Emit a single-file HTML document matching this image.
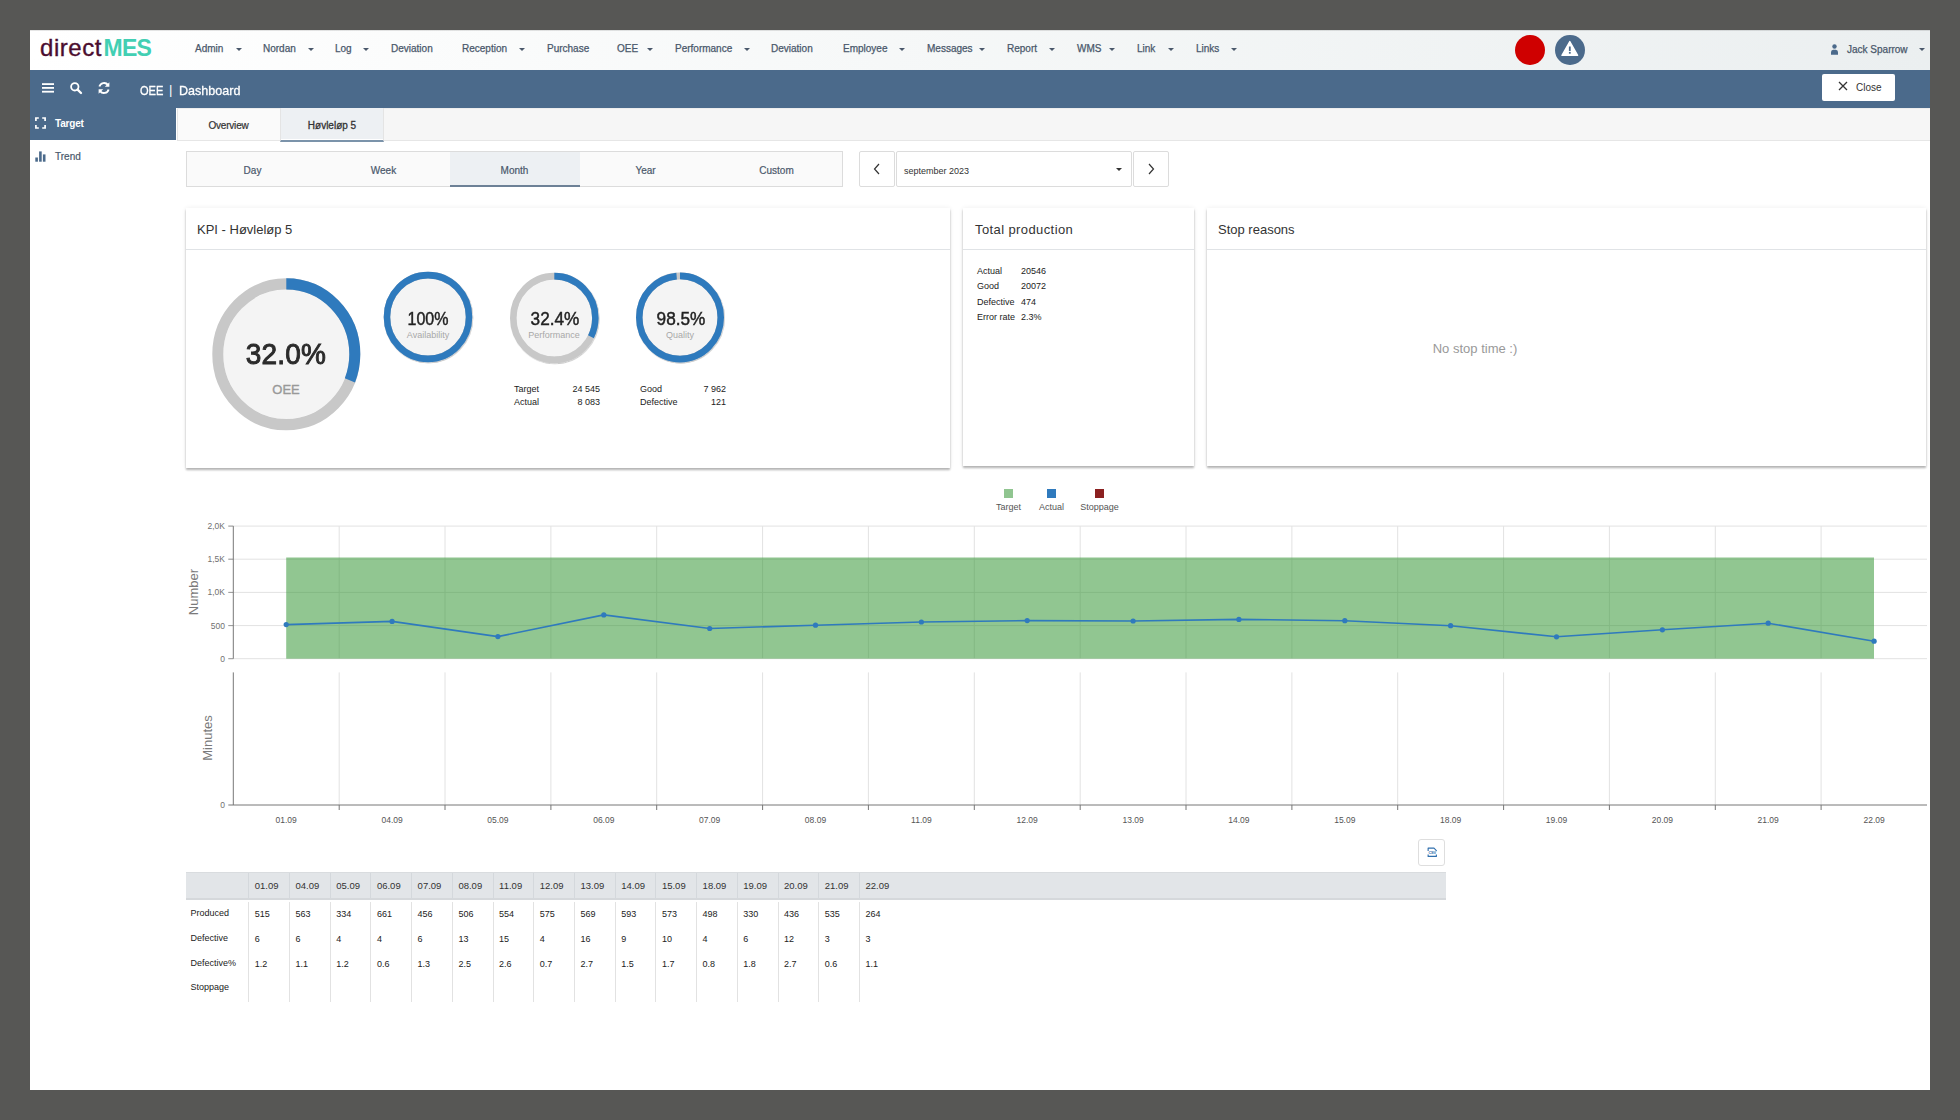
<!DOCTYPE html>
<html><head><meta charset="utf-8">
<style>
*{box-sizing:border-box;margin:0;padding:0}
html,body{width:1960px;height:1120px;overflow:hidden;background:#575755;font-family:"Liberation Sans",sans-serif}
.a{position:absolute}
.t{position:absolute;white-space:nowrap;line-height:1}
#page{position:absolute;left:30px;top:30px;width:1900px;height:1060px;background:#fff}
#nav{left:30px;top:30px;width:1900px;height:40px;background:linear-gradient(90deg,#ffffff 0%,#f6f8f8 45%,#ebeff0 100%);border-top:1px solid rgba(0,0,0,0.1)}
.ni{position:absolute;top:43px;font-size:10px;color:#4a586b;white-space:nowrap;line-height:12px;-webkit-text-stroke:0.25px #4a586b}
.car{position:absolute;top:48px;width:0;height:0;border-left:3px solid transparent;border-right:3px solid transparent;border-top:3px solid #4a586b}
#hdr{left:30px;top:70px;width:1900px;height:38px;background:#4b6a8b}
.pl{top:165px;width:131px;text-align:center;font-size:10px;color:#4a586b;line-height:12px;-webkit-text-stroke:0.2px #4a586b}
.card{position:absolute;background:#fff;box-shadow:0 1.5px 2px rgba(0,0,0,0.28),0 0 5px rgba(0,0,0,0.07)}
.ch{top:222px;font-size:13px;color:#333;line-height:15px}
.tp{font-size:9px;color:#222;line-height:11px}
.gv{top:309px;width:100px;text-align:center;font-size:18px;color:#222;line-height:20px;-webkit-text-stroke:0.45px #222}
.gl{top:330px;width:100px;text-align:center;font-size:9px;color:#a8a8a8;line-height:10px}
.st{font-size:9px;color:#222;line-height:11px}
.sr{width:60px;text-align:right}
.tt{font-size:9.5px;color:#333;line-height:11px}
.tv{font-size:9px;color:#222;line-height:11px}
</style></head><body>
<div id="page"></div>
<div id="nav" class="a"></div>
<div class="t" style="left:40px;top:36px;font-size:24px;line-height:24px;color:#4b0d2f;letter-spacing:0.55px;-webkit-text-stroke:0.35px #4b0d2f">direct</div>
<div class="t" style="left:103.6px;top:36.3px;font-size:23px;line-height:24px;color:#42cfb3;font-weight:bold;letter-spacing:-0.85px">MES</div>
<div class="ni" style="left:195px">Admin</div>
<div class="car" style="left:236px"></div>
<div class="ni" style="left:263px">Nordan</div>
<div class="car" style="left:308px"></div>
<div class="ni" style="left:335px">Log</div>
<div class="car" style="left:363px"></div>
<div class="ni" style="left:391px">Deviation</div>
<div class="ni" style="left:462px">Reception</div>
<div class="car" style="left:519px"></div>
<div class="ni" style="left:547px">Purchase</div>
<div class="ni" style="left:617px">OEE</div>
<div class="car" style="left:647px"></div>
<div class="ni" style="left:675px">Performance</div>
<div class="car" style="left:744px"></div>
<div class="ni" style="left:771px">Deviation</div>
<div class="ni" style="left:843px">Employee</div>
<div class="car" style="left:899px"></div>
<div class="ni" style="left:927px">Messages</div>
<div class="car" style="left:979px"></div>
<div class="ni" style="left:1007px">Report</div>
<div class="car" style="left:1049px"></div>
<div class="ni" style="left:1077px">WMS</div>
<div class="car" style="left:1109px"></div>
<div class="ni" style="left:1137px">Link</div>
<div class="car" style="left:1168px"></div>
<div class="ni" style="left:1196px">Links</div>
<div class="car" style="left:1231px"></div>
<div class="a" style="left:1515px;top:34.5px;width:30px;height:30.5px;border-radius:50%;background:#cf0000"></div>
<div class="a" style="left:1554.5px;top:34.5px;width:30px;height:30.5px;border-radius:50%;background:#4b6a8b"></div>
<svg class="a" style="left:1559.5px;top:39px" width="20" height="20" viewBox="0 0 20 20"><path d="M9.8 2.6 L17.6 16.4 L2 16.4 Z" fill="#fff" stroke="#fff" stroke-width="1.4" stroke-linejoin="round"/><rect x="8.9" y="7.5" width="1.8" height="4.6" fill="#4b6a8b"/><rect x="8.9" y="13" width="1.8" height="1.7" fill="#4b6a8b"/></svg>
<svg class="a" style="left:1830px;top:44px" width="9" height="11" viewBox="0 0 9 11"><circle cx="4.5" cy="2.5" r="2.2" fill="#4b6a8b"/><path d="M1 10.8 L1 8.3 Q1 5.8 3.2 5.8 L5.8 5.8 Q8 5.8 8 8.3 L8 10.8 Z" fill="#4b6a8b"/></svg>
<div class="ni" style="left:1847px;top:44px">Jack Sparrow</div><div class="car" style="left:1918.5px;top:48px"></div>
<div id="hdr" class="a"></div>
<svg class="a" style="left:41px;top:82px" width="14" height="12" viewBox="0 0 14 12"><rect x="1" y="1.2" width="12" height="1.8" fill="#fff"/><rect x="1" y="5" width="12" height="1.8" fill="#fff"/><rect x="1" y="8.8" width="12" height="1.8" fill="#fff"/></svg>
<svg class="a" style="left:69px;top:81px" width="14" height="14" viewBox="0 0 14 14"><circle cx="5.8" cy="5.8" r="3.7" fill="none" stroke="#fff" stroke-width="1.8"/><path d="M8.6 8.6 L12 12" stroke="#fff" stroke-width="2.3" stroke-linecap="round"/></svg>
<svg class="a" style="left:97px;top:81px" width="14" height="14" viewBox="0 0 14 14"><path d="M2.4 5.6 A4.8 4.8 0 0 1 10.9 3.9" fill="none" stroke="#fff" stroke-width="1.9"/><path d="M12.4 1.2 L12.4 5.8 L7.8 5.8 Z" fill="#fff"/><path d="M11.6 8.4 A4.8 4.8 0 0 1 3.1 10.1" fill="none" stroke="#fff" stroke-width="1.9"/><path d="M1.6 12.8 L1.6 8.2 L6.2 8.2 Z" fill="#fff"/></svg>
<div class="t" style="left:140px;top:84px;font-size:13.5px;color:#fff;line-height:14px;transform:scaleX(0.82);transform-origin:0 0;-webkit-text-stroke:0.3px #fff">OEE</div>
<div class="t" style="left:169px;top:83px;font-size:13px;color:#fff;line-height:14px">|</div>
<div class="t" style="left:179px;top:84px;font-size:13.5px;color:#fff;line-height:14px;transform:scaleX(0.93);transform-origin:0 0;-webkit-text-stroke:0.3px #fff">Dashboard</div>
<div class="a" style="left:1822px;top:74px;width:73px;height:27px;background:#fff;border-radius:2px"></div>
<svg class="a" style="left:1838px;top:81px" width="10" height="10" viewBox="0 0 10 10"><path d="M1 1 L9 9 M9 1 L1 9" stroke="#333" stroke-width="1.3"/></svg>
<div class="t" style="left:1856px;top:82px;font-size:10px;color:#333;line-height:12px">Close</div>
<div class="a" style="left:30px;top:108px;width:146px;height:32px;background:#4b6a8b"></div>
<svg class="a" style="left:35px;top:117px" width="11" height="12" viewBox="0 0 11 12"><path d="M0.9 4 V1 H3.8 M7.2 1 H10.1 V4 M10.1 8 V11 H7.2 M3.8 11 H0.9 V8" fill="none" stroke="#fff" stroke-width="1.7"/></svg>
<div class="t" style="left:55px;top:118px;font-size:10px;color:#fff;font-weight:bold;line-height:12px;letter-spacing:-0.2px">Target</div>
<svg class="a" style="left:35px;top:151px" width="11" height="11" viewBox="0 0 11 11"><rect x="0.3" y="6.5" width="2.6" height="4.2" fill="#4b6a8b"/><rect x="4.1" y="0.4" width="2.6" height="10.3" fill="#4b6a8b"/><rect x="7.9" y="3.4" width="2.6" height="7.3" fill="#4b6a8b"/></svg>
<div class="t" style="left:55px;top:151px;font-size:10px;color:#4a586b;line-height:12px;-webkit-text-stroke:0.2px #4a586b">Trend</div>
<div class="a" style="left:177px;top:108px;width:1753px;height:33px;background:#f6f6f6;border-top:1px solid #ededed;border-bottom:1px solid #e6e6e6"></div>
<div class="a" style="left:177px;top:109px;width:103px;height:32px;background:#fafafa;border-left:1px solid #e4e4e4;border-bottom:1px solid #e6e6e6"></div>
<div class="t" style="left:177px;width:103px;text-align:center;top:120px;font-size:10px;color:#333;line-height:12px;letter-spacing:-0.2px;-webkit-text-stroke:0.2px #333">Overview</div>
<div class="a" style="left:280px;top:108px;width:104px;height:34px;background:#edf0f3;border-left:1px solid #e4e4e4;border-right:1px solid #e4e4e4;border-bottom:2px solid #7b93aa"></div>
<div class="a" style="left:281px;top:139px;width:102px;height:1px;background:#fff"></div>
<div class="t" style="left:280px;width:104px;text-align:center;top:120px;font-size:10px;color:#333;line-height:12px;-webkit-text-stroke:0.3px #333">Høvleløp 5</div>
<div class="a" style="left:186px;top:151px;width:657px;height:36px;background:#fafafa;border:1px solid #dcdcdc"></div>
<div class="a" style="left:450px;top:152px;width:130px;height:35px;background:#edf0f3;border-bottom:2px solid #6d8196"></div>
<div class="t pl" style="left:187px">Day</div>
<div class="t pl" style="left:318px">Week</div>
<div class="t pl" style="left:449px">Month</div>
<div class="t pl" style="left:580px">Year</div>
<div class="t pl" style="left:711px">Custom</div>
<div class="a" style="left:859px;top:151px;width:36px;height:36px;background:#fff;border:1px solid #dcdcdc;border-radius:2px"></div>
<svg class="a" style="left:872px;top:163px" width="10" height="12" viewBox="0 0 10 12"><path d="M7 1 L2.5 6 L7 11" fill="none" stroke="#333" stroke-width="1.2"/></svg>
<div class="a" style="left:896px;top:151px;width:236px;height:36px;background:#fff;border:1px solid #dcdcdc;border-radius:2px"></div>
<div class="t" style="left:904px;top:166px;font-size:9px;color:#333;line-height:11px">september 2023</div>
<div class="car" style="left:1116px;top:168px;border-top-color:#333"></div>
<div class="a" style="left:1133px;top:151px;width:36px;height:36px;background:#fff;border:1px solid #dcdcdc;border-radius:2px"></div>
<svg class="a" style="left:1146px;top:163px" width="10" height="12" viewBox="0 0 10 12"><path d="M3 1 L7.5 6 L3 11" fill="none" stroke="#333" stroke-width="1.2"/></svg>
<div class="card" style="left:186px;top:208px;width:764px;height:260px"></div>
<div class="a" style="left:186px;top:249px;width:764px;height:1px;background:#e0e3e6"></div>
<div class="card" style="left:963px;top:208px;width:231px;height:258px"></div>
<div class="a" style="left:963px;top:249px;width:231px;height:1px;background:#e0e3e6"></div>
<div class="card" style="left:1207px;top:208px;width:719px;height:258px"></div>
<div class="a" style="left:1207px;top:249px;width:719px;height:1px;background:#e0e3e6"></div>
<div class="t ch" style="left:197px">KPI - Høvleløp 5</div>
<div class="t ch" style="left:975px;letter-spacing:0.4px">Total production</div>
<div class="t ch" style="left:1218px">Stop reasons</div>
<div class="t" style="left:1207px;width:536px;text-align:center;top:342px;font-size:13px;color:#999;line-height:14px">No stop time :)</div>
<div class="t tp" style="left:977px;top:266px">Actual</div><div class="t tp" style="left:1021px;top:266px">20546</div>
<div class="t tp" style="left:977px;top:281px">Good</div><div class="t tp" style="left:1021px;top:281px">20072</div>
<div class="t tp" style="left:977px;top:297px">Defective</div><div class="t tp" style="left:1021px;top:297px">474</div>
<div class="t tp" style="left:977px;top:312px">Error rate</div><div class="t tp" style="left:1021px;top:312px">2.3%</div>
<svg class="a" style="left:0;top:0" width="960" height="480" viewBox="0 0 960 480"><defs><filter id="sh" x="-20%" y="-20%" width="140%" height="140%"><feDropShadow dx="0.6" dy="0.8" stdDeviation="0.7" flood-color="#000" flood-opacity="0.25"/></filter></defs><g transform="translate(286.3 354.3) scale(1 1.027)"><circle cx="0" cy="0" r="63" fill="#f4f4f4"/><circle cx="0" cy="0" r="68.5" fill="none" stroke="#c8c8c8" stroke-width="11"/><circle cx="0" cy="0" r="68.5" fill="none" stroke="#2f7abd" stroke-width="11" stroke-dasharray="133.42 430.40" transform="rotate(-90)"/></g><g filter="url(#sh)"><g transform="translate(428 317) scale(1 1.02)"><circle cx="0" cy="0" r="37.8" fill="#f4f4f4"/><circle cx="0" cy="0" r="41.05" fill="none" stroke="#c8c8c8" stroke-width="6.5"/><circle cx="0" cy="0" r="41.05" fill="none" stroke="#2f7abd" stroke-width="6.5"/></g></g><g filter="url(#sh)"><g transform="translate(554.3 318) scale(1 1.02)"><circle cx="0" cy="0" r="37.8" fill="#f4f4f4"/><circle cx="0" cy="0" r="41.05" fill="none" stroke="#c8c8c8" stroke-width="6.5"/><circle cx="0" cy="0" r="41.05" fill="none" stroke="#2f7abd" stroke-width="6.5" stroke-dasharray="83.57 257.92" transform="rotate(-90)"/></g></g><g filter="url(#sh)"><g transform="translate(680 317.5) scale(1 1.02)"><circle cx="0" cy="0" r="37.5" fill="#f4f4f4"/><circle cx="0" cy="0" r="40.75" fill="none" stroke="#c8c8c8" stroke-width="6.5"/><circle cx="0" cy="0" r="40.75" fill="none" stroke="#2f7abd" stroke-width="6.5" stroke-dasharray="252.20 256.04" transform="rotate(-90)"/></g></g></svg>
<div class="t" style="left:186px;width:200px;text-align:center;top:338px;font-size:28px;color:#2b2b2b;line-height:32px;transform:scaleY(1.06);letter-spacing:0.2px;-webkit-text-stroke:0.9px #2b2b2b">32.0%</div>
<div class="t" style="left:186px;width:200px;text-align:center;top:383px;font-size:13px;color:#999;line-height:14px;-webkit-text-stroke:0.35px #999">OEE</div>
<div class="t gv" style="left:378px;transform:scaleX(0.89)">100%</div><div class="t gl" style="left:378px">Availability</div>
<div class="t gv" style="left:504.5px;transform:scaleX(0.955)">32.4%</div><div class="t gl" style="left:504px">Performance</div>
<div class="t gv" style="left:630.5px;transform:scaleX(0.955)">98.5%</div><div class="t gl" style="left:630px">Quality</div>
<div class="t st" style="left:514px;top:384px">Target</div><div class="t st sr" style="left:540px;top:384px">24 545</div>
<div class="t st" style="left:514px;top:397px">Actual</div><div class="t st sr" style="left:540px;top:397px">8 083</div>
<div class="t st" style="left:640px;top:384px">Good</div><div class="t st sr" style="left:666px;top:384px">7 962</div>
<div class="t st" style="left:640px;top:397px">Defective</div><div class="t st sr" style="left:666px;top:397px">121</div>
<svg class="a" style="left:0;top:0" width="1960" height="840" viewBox="0 0 1960 840"><line x1="228.3" y1="658.7" x2="1927" y2="658.7" stroke="#e2e2e2" stroke-width="1"/><line x1="228.3" y1="625.6" x2="1927" y2="625.6" stroke="#e2e2e2" stroke-width="1"/><line x1="228.3" y1="592.4" x2="1927" y2="592.4" stroke="#e2e2e2" stroke-width="1"/><line x1="228.3" y1="559.2" x2="1927" y2="559.2" stroke="#e2e2e2" stroke-width="1"/><line x1="228.3" y1="526.1" x2="1927" y2="526.1" stroke="#e2e2e2" stroke-width="1"/><line x1="339.2" y1="526.1" x2="339.2" y2="658.7" stroke="#e2e2e2" stroke-width="1"/><line x1="445.0" y1="526.1" x2="445.0" y2="658.7" stroke="#e2e2e2" stroke-width="1"/><line x1="550.9" y1="526.1" x2="550.9" y2="658.7" stroke="#e2e2e2" stroke-width="1"/><line x1="656.7" y1="526.1" x2="656.7" y2="658.7" stroke="#e2e2e2" stroke-width="1"/><line x1="762.6" y1="526.1" x2="762.6" y2="658.7" stroke="#e2e2e2" stroke-width="1"/><line x1="868.4" y1="526.1" x2="868.4" y2="658.7" stroke="#e2e2e2" stroke-width="1"/><line x1="974.3" y1="526.1" x2="974.3" y2="658.7" stroke="#e2e2e2" stroke-width="1"/><line x1="1080.2" y1="526.1" x2="1080.2" y2="658.7" stroke="#e2e2e2" stroke-width="1"/><line x1="1186.0" y1="526.1" x2="1186.0" y2="658.7" stroke="#e2e2e2" stroke-width="1"/><line x1="1291.9" y1="526.1" x2="1291.9" y2="658.7" stroke="#e2e2e2" stroke-width="1"/><line x1="1397.7" y1="526.1" x2="1397.7" y2="658.7" stroke="#e2e2e2" stroke-width="1"/><line x1="1503.6" y1="526.1" x2="1503.6" y2="658.7" stroke="#e2e2e2" stroke-width="1"/><line x1="1609.4" y1="526.1" x2="1609.4" y2="658.7" stroke="#e2e2e2" stroke-width="1"/><line x1="1715.3" y1="526.1" x2="1715.3" y2="658.7" stroke="#e2e2e2" stroke-width="1"/><line x1="1821.1" y1="526.1" x2="1821.1" y2="658.7" stroke="#e2e2e2" stroke-width="1"/><line x1="228.3" y1="658.7" x2="233.3" y2="658.7" stroke="#999" stroke-width="1"/><line x1="228.3" y1="625.6" x2="233.3" y2="625.6" stroke="#999" stroke-width="1"/><line x1="228.3" y1="592.4" x2="233.3" y2="592.4" stroke="#999" stroke-width="1"/><line x1="228.3" y1="559.2" x2="233.3" y2="559.2" stroke="#999" stroke-width="1"/><line x1="228.3" y1="526.1" x2="233.3" y2="526.1" stroke="#999" stroke-width="1"/><line x1="233.3" y1="526.1" x2="233.3" y2="658.7" stroke="#777" stroke-width="1"/><rect x="286.2" y="557.5" width="1587.8" height="101.2" fill="#2f942f" fill-opacity="0.53"/><polyline points="286.2,624.6 392.1,621.4 497.9,636.6 603.8,614.9 709.7,628.5 815.5,625.2 921.4,622.0 1027.2,620.6 1133.1,621.0 1238.9,619.4 1344.8,620.7 1450.6,625.7 1556.5,636.8 1662.4,629.8 1768.2,623.2 1874.1,641.2" fill="none" stroke="#2f7abd" stroke-width="1.6"/><circle cx="286.2" cy="624.6" r="2.6" fill="#2f7abd"/><circle cx="392.1" cy="621.4" r="2.6" fill="#2f7abd"/><circle cx="497.9" cy="636.6" r="2.6" fill="#2f7abd"/><circle cx="603.8" cy="614.9" r="2.6" fill="#2f7abd"/><circle cx="709.7" cy="628.5" r="2.6" fill="#2f7abd"/><circle cx="815.5" cy="625.2" r="2.6" fill="#2f7abd"/><circle cx="921.4" cy="622.0" r="2.6" fill="#2f7abd"/><circle cx="1027.2" cy="620.6" r="2.6" fill="#2f7abd"/><circle cx="1133.1" cy="621.0" r="2.6" fill="#2f7abd"/><circle cx="1238.9" cy="619.4" r="2.6" fill="#2f7abd"/><circle cx="1344.8" cy="620.7" r="2.6" fill="#2f7abd"/><circle cx="1450.6" cy="625.7" r="2.6" fill="#2f7abd"/><circle cx="1556.5" cy="636.8" r="2.6" fill="#2f7abd"/><circle cx="1662.4" cy="629.8" r="2.6" fill="#2f7abd"/><circle cx="1768.2" cy="623.2" r="2.6" fill="#2f7abd"/><circle cx="1874.1" cy="641.2" r="2.6" fill="#2f7abd"/><text x="225" y="661.7" text-anchor="end" font-family="Liberation Sans" font-size="8.5" fill="#707070">0</text><text x="225" y="628.6" text-anchor="end" font-family="Liberation Sans" font-size="8.5" fill="#707070">500</text><text x="225" y="595.4" text-anchor="end" font-family="Liberation Sans" font-size="8.5" fill="#707070">1,0K</text><text x="225" y="562.2" text-anchor="end" font-family="Liberation Sans" font-size="8.5" fill="#707070">1,5K</text><text x="225" y="529.1" text-anchor="end" font-family="Liberation Sans" font-size="8.5" fill="#707070">2,0K</text><text transform="translate(198 592) rotate(-90)" text-anchor="middle" font-family="Liberation Sans" font-size="13" fill="#7a7a7a">Number</text><line x1="339.2" y1="672.4" x2="339.2" y2="805" stroke="#e2e2e2" stroke-width="1"/><line x1="445.0" y1="672.4" x2="445.0" y2="805" stroke="#e2e2e2" stroke-width="1"/><line x1="550.9" y1="672.4" x2="550.9" y2="805" stroke="#e2e2e2" stroke-width="1"/><line x1="656.7" y1="672.4" x2="656.7" y2="805" stroke="#e2e2e2" stroke-width="1"/><line x1="762.6" y1="672.4" x2="762.6" y2="805" stroke="#e2e2e2" stroke-width="1"/><line x1="868.4" y1="672.4" x2="868.4" y2="805" stroke="#e2e2e2" stroke-width="1"/><line x1="974.3" y1="672.4" x2="974.3" y2="805" stroke="#e2e2e2" stroke-width="1"/><line x1="1080.2" y1="672.4" x2="1080.2" y2="805" stroke="#e2e2e2" stroke-width="1"/><line x1="1186.0" y1="672.4" x2="1186.0" y2="805" stroke="#e2e2e2" stroke-width="1"/><line x1="1291.9" y1="672.4" x2="1291.9" y2="805" stroke="#e2e2e2" stroke-width="1"/><line x1="1397.7" y1="672.4" x2="1397.7" y2="805" stroke="#e2e2e2" stroke-width="1"/><line x1="1503.6" y1="672.4" x2="1503.6" y2="805" stroke="#e2e2e2" stroke-width="1"/><line x1="1609.4" y1="672.4" x2="1609.4" y2="805" stroke="#e2e2e2" stroke-width="1"/><line x1="1715.3" y1="672.4" x2="1715.3" y2="805" stroke="#e2e2e2" stroke-width="1"/><line x1="1821.1" y1="672.4" x2="1821.1" y2="805" stroke="#e2e2e2" stroke-width="1"/><line x1="339.2" y1="805" x2="339.2" y2="810" stroke="#777" stroke-width="1"/><line x1="445.0" y1="805" x2="445.0" y2="810" stroke="#777" stroke-width="1"/><line x1="550.9" y1="805" x2="550.9" y2="810" stroke="#777" stroke-width="1"/><line x1="656.7" y1="805" x2="656.7" y2="810" stroke="#777" stroke-width="1"/><line x1="762.6" y1="805" x2="762.6" y2="810" stroke="#777" stroke-width="1"/><line x1="868.4" y1="805" x2="868.4" y2="810" stroke="#777" stroke-width="1"/><line x1="974.3" y1="805" x2="974.3" y2="810" stroke="#777" stroke-width="1"/><line x1="1080.2" y1="805" x2="1080.2" y2="810" stroke="#777" stroke-width="1"/><line x1="1186.0" y1="805" x2="1186.0" y2="810" stroke="#777" stroke-width="1"/><line x1="1291.9" y1="805" x2="1291.9" y2="810" stroke="#777" stroke-width="1"/><line x1="1397.7" y1="805" x2="1397.7" y2="810" stroke="#777" stroke-width="1"/><line x1="1503.6" y1="805" x2="1503.6" y2="810" stroke="#777" stroke-width="1"/><line x1="1609.4" y1="805" x2="1609.4" y2="810" stroke="#777" stroke-width="1"/><line x1="1715.3" y1="805" x2="1715.3" y2="810" stroke="#777" stroke-width="1"/><line x1="1821.1" y1="805" x2="1821.1" y2="810" stroke="#777" stroke-width="1"/><line x1="233.3" y1="672.4" x2="233.3" y2="805" stroke="#777" stroke-width="1"/><line x1="228.3" y1="805" x2="1927" y2="805" stroke="#777" stroke-width="1"/><text x="225" y="808.0" text-anchor="end" font-family="Liberation Sans" font-size="8.5" fill="#707070">0</text><text transform="translate(212 738) rotate(-90)" text-anchor="middle" font-family="Liberation Sans" font-size="13" fill="#7a7a7a">Minutes</text><text x="286.2" y="823" text-anchor="middle" font-family="Liberation Sans" font-size="8.5" fill="#555">01.09</text><text x="392.1" y="823" text-anchor="middle" font-family="Liberation Sans" font-size="8.5" fill="#555">04.09</text><text x="497.9" y="823" text-anchor="middle" font-family="Liberation Sans" font-size="8.5" fill="#555">05.09</text><text x="603.8" y="823" text-anchor="middle" font-family="Liberation Sans" font-size="8.5" fill="#555">06.09</text><text x="709.7" y="823" text-anchor="middle" font-family="Liberation Sans" font-size="8.5" fill="#555">07.09</text><text x="815.5" y="823" text-anchor="middle" font-family="Liberation Sans" font-size="8.5" fill="#555">08.09</text><text x="921.4" y="823" text-anchor="middle" font-family="Liberation Sans" font-size="8.5" fill="#555">11.09</text><text x="1027.2" y="823" text-anchor="middle" font-family="Liberation Sans" font-size="8.5" fill="#555">12.09</text><text x="1133.1" y="823" text-anchor="middle" font-family="Liberation Sans" font-size="8.5" fill="#555">13.09</text><text x="1238.9" y="823" text-anchor="middle" font-family="Liberation Sans" font-size="8.5" fill="#555">14.09</text><text x="1344.8" y="823" text-anchor="middle" font-family="Liberation Sans" font-size="8.5" fill="#555">15.09</text><text x="1450.6" y="823" text-anchor="middle" font-family="Liberation Sans" font-size="8.5" fill="#555">18.09</text><text x="1556.5" y="823" text-anchor="middle" font-family="Liberation Sans" font-size="8.5" fill="#555">19.09</text><text x="1662.4" y="823" text-anchor="middle" font-family="Liberation Sans" font-size="8.5" fill="#555">20.09</text><text x="1768.2" y="823" text-anchor="middle" font-family="Liberation Sans" font-size="8.5" fill="#555">21.09</text><text x="1874.1" y="823" text-anchor="middle" font-family="Liberation Sans" font-size="8.5" fill="#555">22.09</text><rect x="1004" y="489" width="9" height="9" fill="#90c590"/><text x="1008.5" y="510" text-anchor="middle" font-family="Liberation Sans" font-size="9" fill="#555">Target</text><rect x="1047" y="489" width="9" height="9" fill="#2f7abd"/><text x="1051.5" y="510" text-anchor="middle" font-family="Liberation Sans" font-size="9" fill="#555">Actual</text><rect x="1095" y="489" width="9" height="9" fill="#8b2020"/><text x="1099.5" y="510" text-anchor="middle" font-family="Liberation Sans" font-size="9" fill="#555">Stoppage</text></svg>
<div class="a" style="left:186px;top:872px;width:1260px;height:28px;background:#e2e5e8;border-top:1px solid #d9dcdf;border-bottom:2px solid #d5d8db"></div>
<div class="a" style="left:248.3px;top:873px;width:1px;height:26px;background:#d4d8dc"></div>
<div class="a" style="left:248.3px;top:902px;width:1px;height:100px;background:#e2e2e2"></div>
<div class="t tt" style="left:254.8px;top:880px">01.09</div>
<div class="t tv" style="left:254.8px;top:909px">515</div>
<div class="t tv" style="left:254.8px;top:934px">6</div>
<div class="t tv" style="left:254.8px;top:959px">1.2</div>
<div class="a" style="left:289.0px;top:873px;width:1px;height:26px;background:#d4d8dc"></div>
<div class="a" style="left:289.0px;top:902px;width:1px;height:100px;background:#e2e2e2"></div>
<div class="t tt" style="left:295.5px;top:880px">04.09</div>
<div class="t tv" style="left:295.5px;top:909px">563</div>
<div class="t tv" style="left:295.5px;top:934px">6</div>
<div class="t tv" style="left:295.5px;top:959px">1.1</div>
<div class="a" style="left:329.7px;top:873px;width:1px;height:26px;background:#d4d8dc"></div>
<div class="a" style="left:329.7px;top:902px;width:1px;height:100px;background:#e2e2e2"></div>
<div class="t tt" style="left:336.2px;top:880px">05.09</div>
<div class="t tv" style="left:336.2px;top:909px">334</div>
<div class="t tv" style="left:336.2px;top:934px">4</div>
<div class="t tv" style="left:336.2px;top:959px">1.2</div>
<div class="a" style="left:370.4px;top:873px;width:1px;height:26px;background:#d4d8dc"></div>
<div class="a" style="left:370.4px;top:902px;width:1px;height:100px;background:#e2e2e2"></div>
<div class="t tt" style="left:376.9px;top:880px">06.09</div>
<div class="t tv" style="left:376.9px;top:909px">661</div>
<div class="t tv" style="left:376.9px;top:934px">4</div>
<div class="t tv" style="left:376.9px;top:959px">0.6</div>
<div class="a" style="left:411.1px;top:873px;width:1px;height:26px;background:#d4d8dc"></div>
<div class="a" style="left:411.1px;top:902px;width:1px;height:100px;background:#e2e2e2"></div>
<div class="t tt" style="left:417.6px;top:880px">07.09</div>
<div class="t tv" style="left:417.6px;top:909px">456</div>
<div class="t tv" style="left:417.6px;top:934px">6</div>
<div class="t tv" style="left:417.6px;top:959px">1.3</div>
<div class="a" style="left:451.9px;top:873px;width:1px;height:26px;background:#d4d8dc"></div>
<div class="a" style="left:451.9px;top:902px;width:1px;height:100px;background:#e2e2e2"></div>
<div class="t tt" style="left:458.4px;top:880px">08.09</div>
<div class="t tv" style="left:458.4px;top:909px">506</div>
<div class="t tv" style="left:458.4px;top:934px">13</div>
<div class="t tv" style="left:458.4px;top:959px">2.5</div>
<div class="a" style="left:492.6px;top:873px;width:1px;height:26px;background:#d4d8dc"></div>
<div class="a" style="left:492.6px;top:902px;width:1px;height:100px;background:#e2e2e2"></div>
<div class="t tt" style="left:499.1px;top:880px">11.09</div>
<div class="t tv" style="left:499.1px;top:909px">554</div>
<div class="t tv" style="left:499.1px;top:934px">15</div>
<div class="t tv" style="left:499.1px;top:959px">2.6</div>
<div class="a" style="left:533.3px;top:873px;width:1px;height:26px;background:#d4d8dc"></div>
<div class="a" style="left:533.3px;top:902px;width:1px;height:100px;background:#e2e2e2"></div>
<div class="t tt" style="left:539.8px;top:880px">12.09</div>
<div class="t tv" style="left:539.8px;top:909px">575</div>
<div class="t tv" style="left:539.8px;top:934px">4</div>
<div class="t tv" style="left:539.8px;top:959px">0.7</div>
<div class="a" style="left:574.0px;top:873px;width:1px;height:26px;background:#d4d8dc"></div>
<div class="a" style="left:574.0px;top:902px;width:1px;height:100px;background:#e2e2e2"></div>
<div class="t tt" style="left:580.5px;top:880px">13.09</div>
<div class="t tv" style="left:580.5px;top:909px">569</div>
<div class="t tv" style="left:580.5px;top:934px">16</div>
<div class="t tv" style="left:580.5px;top:959px">2.7</div>
<div class="a" style="left:614.7px;top:873px;width:1px;height:26px;background:#d4d8dc"></div>
<div class="a" style="left:614.7px;top:902px;width:1px;height:100px;background:#e2e2e2"></div>
<div class="t tt" style="left:621.2px;top:880px">14.09</div>
<div class="t tv" style="left:621.2px;top:909px">593</div>
<div class="t tv" style="left:621.2px;top:934px">9</div>
<div class="t tv" style="left:621.2px;top:959px">1.5</div>
<div class="a" style="left:655.4px;top:873px;width:1px;height:26px;background:#d4d8dc"></div>
<div class="a" style="left:655.4px;top:902px;width:1px;height:100px;background:#e2e2e2"></div>
<div class="t tt" style="left:661.9px;top:880px">15.09</div>
<div class="t tv" style="left:661.9px;top:909px">573</div>
<div class="t tv" style="left:661.9px;top:934px">10</div>
<div class="t tv" style="left:661.9px;top:959px">1.7</div>
<div class="a" style="left:696.1px;top:873px;width:1px;height:26px;background:#d4d8dc"></div>
<div class="a" style="left:696.1px;top:902px;width:1px;height:100px;background:#e2e2e2"></div>
<div class="t tt" style="left:702.6px;top:880px">18.09</div>
<div class="t tv" style="left:702.6px;top:909px">498</div>
<div class="t tv" style="left:702.6px;top:934px">4</div>
<div class="t tv" style="left:702.6px;top:959px">0.8</div>
<div class="a" style="left:736.8px;top:873px;width:1px;height:26px;background:#d4d8dc"></div>
<div class="a" style="left:736.8px;top:902px;width:1px;height:100px;background:#e2e2e2"></div>
<div class="t tt" style="left:743.3px;top:880px">19.09</div>
<div class="t tv" style="left:743.3px;top:909px">330</div>
<div class="t tv" style="left:743.3px;top:934px">6</div>
<div class="t tv" style="left:743.3px;top:959px">1.8</div>
<div class="a" style="left:777.5px;top:873px;width:1px;height:26px;background:#d4d8dc"></div>
<div class="a" style="left:777.5px;top:902px;width:1px;height:100px;background:#e2e2e2"></div>
<div class="t tt" style="left:784.0px;top:880px">20.09</div>
<div class="t tv" style="left:784.0px;top:909px">436</div>
<div class="t tv" style="left:784.0px;top:934px">12</div>
<div class="t tv" style="left:784.0px;top:959px">2.7</div>
<div class="a" style="left:818.2px;top:873px;width:1px;height:26px;background:#d4d8dc"></div>
<div class="a" style="left:818.2px;top:902px;width:1px;height:100px;background:#e2e2e2"></div>
<div class="t tt" style="left:824.7px;top:880px">21.09</div>
<div class="t tv" style="left:824.7px;top:909px">535</div>
<div class="t tv" style="left:824.7px;top:934px">3</div>
<div class="t tv" style="left:824.7px;top:959px">0.6</div>
<div class="a" style="left:859.0px;top:873px;width:1px;height:26px;background:#d4d8dc"></div>
<div class="a" style="left:859.0px;top:902px;width:1px;height:100px;background:#e2e2e2"></div>
<div class="t tt" style="left:865.5px;top:880px">22.09</div>
<div class="t tv" style="left:865.5px;top:909px">264</div>
<div class="t tv" style="left:865.5px;top:934px">3</div>
<div class="t tv" style="left:865.5px;top:959px">1.1</div>
<div class="t tv" style="left:190.5px;top:908px">Produced</div>
<div class="t tv" style="left:190.5px;top:933px">Defective</div>
<div class="t tv" style="left:190.5px;top:958px">Defective%</div>
<div class="t tv" style="left:190.5px;top:982px">Stoppage</div>
<div class="a" style="left:1418px;top:839px;width:27px;height:27px;border:1px solid #dedede;border-radius:3px;background:#fff"></div>
<svg class="a" style="left:1426.5px;top:846.5px" width="10.5" height="11" viewBox="0 0 12 12.5"><path d="M1.3 4.6 V1.3 H8 L10.7 4 V4.6 M1.3 8.6 V10.7 H10.7 V8.6" fill="none" stroke="#2f6fad" stroke-width="1.3" stroke-linejoin="round"/><text x="6" y="8.2" text-anchor="middle" font-family="Liberation Sans" font-weight="bold" font-size="4.6" fill="#2f6fad" letter-spacing="-0.2">CSV</text></svg>
</body></html>
